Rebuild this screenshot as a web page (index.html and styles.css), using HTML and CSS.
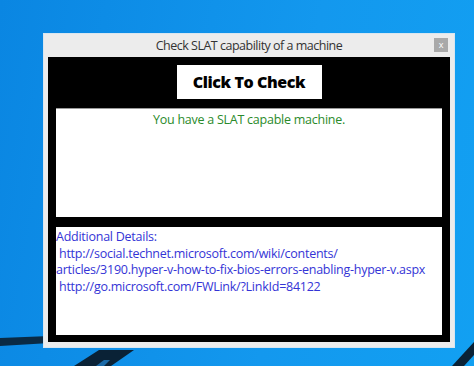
FILE: index.html
```html
<!DOCTYPE html>
<html lang="en">

<head>
  <meta charset="UTF-8">
  <title>Check SLAT capability of a machine</title>
  <link rel="stylesheet" href="styles.css">
</head>

<body>
  <!-- desktop wallpaper streaks -->
  <svg class="wallpaper" width="474" height="366" viewBox="0 0 474 366">
    <polygon points="0,338 50,336 50,343 0,346" fill="#0a2a44" />
    <polygon points="74,366 99,350 134,350 111,366" fill="#0a2236" />
    <polygon points="96,366 104,360 110,360 104,366" fill="#1a6aa8" />
    <polygon points="452,366 474,342 474,355 464,366" fill="#0a2236" />
  </svg>

  <div class="window">
    <div class="title-bar">
      <span class="title">Check SLAT capability of a machine</span>
      <span class="close-btn">x</span>
    </div>
    <div class="panel">
      <button class="check-btn">Click To Check</button>
      <div class="result-box">
        <div class="result">You have a SLAT capable machine.</div>
      </div>
      <div class="details-box">
        <div class="line">Additional Details:</div>
        <div class="line"> http://social.technet.microsoft.com/wiki/contents/</div>
        <div class="line">articles/3190.hyper-v-how-to-fix-bios-errors-enabling-hyper-v.aspx</div>
        <div class="line"> http://go.microsoft.com/FWLink/?LinkId=84122</div>
      </div>
    </div>
  </div>
</body>

</html>
```

FILE: styles.css
```css
body {
  margin: 0;
  padding: 0;
  width: 474px;
  height: 366px;
  overflow: hidden;
  background: linear-gradient(100deg, #0a86e2, #1398ee 60%, #12a0f2);
  font-family: 'Open Sans', 'Noto Sans', Arial, sans-serif;
  position: relative;
}

.wallpaper {
  position: absolute;
  top: 0;
  left: 0;
}

.window {
  position: relative;
  margin: 33px 0 0 43px;
  width: 412px;
  height: 315px;
  box-sizing: border-box;
  background: #ececec;
  border: 1px solid #d8e6f0;
  padding: 0 4px 5px 4px;
  display: flex;
  flex-direction: column;
}

.title-bar {
  height: 23px;
  display: flex;
  align-items: center;
  justify-content: center;
  position: relative;
}

.title {
  font-size: 12.5px;
  color: #333;
  letter-spacing: -0.5px;
}

.close-btn {
  position: absolute;
  top: 4px;
  right: 2px;
  width: 14px;
  height: 14px;
  background: #a9a9a9;
  color: #fff;
  font-size: 9px;
  line-height: 13px;
  text-align: center;
}

.panel {
  flex: 1;
  background: #000;
  display: flex;
  flex-direction: column;
  align-items: center;
  padding: 8px 8px 7px 8px;
  gap: 9px;
}

.check-btn {
  width: 145px;
  height: 34px;
  background: #fff;
  border: none;
  padding: 0;
  font-family: 'Open Sans', 'Noto Sans', Arial, sans-serif;
  font-size: 16px;
  font-weight: 800;
  color: #000;
  letter-spacing: -0.4px;
}

.result-box {
  align-self: stretch;
  height: 109px;
  background: #fff;
  border-top: 1px solid #9a9a9a;
  box-sizing: border-box;
  text-align: center;
}

.result {
  font-size: 12.5px;
  color: #2a8a2a;
  margin-top: 2px;
  letter-spacing: -0.25px;
}

.details-box {
  align-self: stretch;
  flex: 1;
  margin-top: 1px;
  background: #fff;
  padding-top: 2px;
  color: #3434d6;
  font-size: 12.5px;
  line-height: 16.5px;
  overflow: hidden;
}

.line {
  white-space: pre;
  letter-spacing: -0.25px;
}
```
